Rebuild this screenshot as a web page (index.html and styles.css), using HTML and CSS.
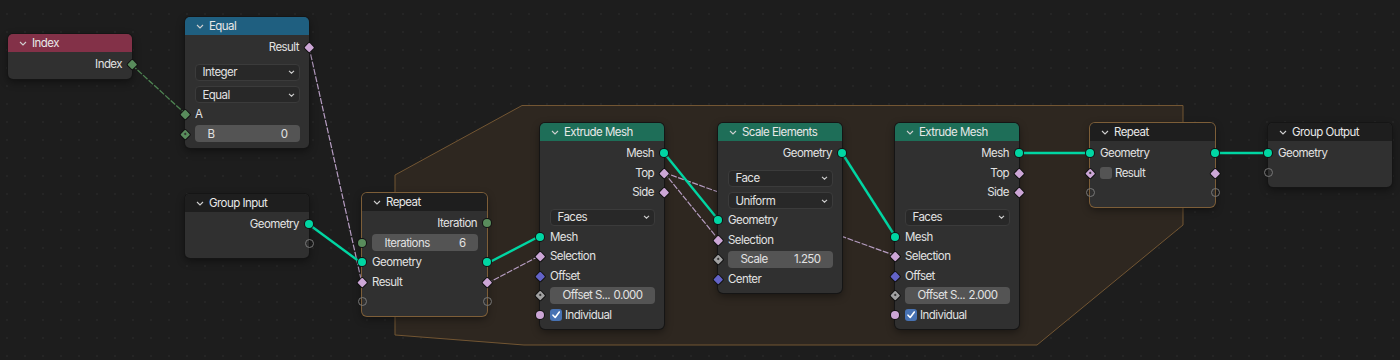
FILE: index.html
```html
<!DOCTYPE html>
<html>
<head>
<meta charset="utf-8">
<link rel="stylesheet" href="styles.css">
<title>Geometry Nodes</title>
</head>
<body>
<div class="editor">
  <svg class="wires" width="1400" height="360" viewBox="0 0 1400 360">
    <polygon class="zone" points="522,105.5 1183,105.5 1183,225 1037,345 524,345 395,335 395,175"/>
    <!-- field links -->
    <line class="w-int" x1="132" y1="65" x2="185" y2="113.5"/>
    <line class="w-bool" x1="309" y1="47" x2="362" y2="283.5"/>
    <line class="w-bool" x1="487" y1="283.5" x2="540" y2="255.5"/>
    <line class="w-bool" x1="664" y1="172.5" x2="718" y2="239"/>
    <line class="w-bool" x1="664" y1="172.5" x2="895" y2="255.5"/>
    <!-- geometry links -->
    <line class="w-geo" x1="309" y1="224.5" x2="362" y2="263.5"/>
    <line class="w-geo" x1="487" y1="263.5" x2="540" y2="236"/>
    <line class="w-geo" x1="664" y1="153" x2="718" y2="219.5"/>
    <line class="w-geo" x1="842" y1="153" x2="895" y2="236"/>
    <line class="w-geo" x1="1019" y1="153" x2="1090" y2="153"/>
    <line class="w-geo" x1="1215" y1="153" x2="1268" y2="153"/>
  </svg>

  <div class="node n-index">
    <div class="head attr"><svg class="chev" width="8" height="5"><path d="M1 1l3 3 3-3"/></svg><span>Index</span></div>
    <div class="body">
      <div class="row out"><span>Index</span><i class="sock dia int"></i></div>
    </div>
  </div>

  <div class="node n-equal">
    <div class="head func"><svg class="chev" width="8" height="5"><path d="M1 1l3 3 3-3"/></svg><span>Equal</span></div>
    <div class="body">
      <div class="row out"><span>Result</span><i class="sock dia bool"></i></div>
      <div class="props">
        <div class="select"><span>Integer</span><svg class="chev" width="7" height="4"><path d="M1 .8l2.5 2.4L6 .8"/></svg></div>
        <div class="select"><span>Equal</span><svg class="chev" width="7" height="4"><path d="M1 .8l2.5 2.4L6 .8"/></svg></div>
      </div>
      <div class="row in"><i class="sock dia int"></i><span>A</span></div>
      <div class="row in fld"><i class="sock dia dot int"></i><div class="field"><span>B</span><span>0</span></div></div>
    </div>
  </div>

  <div class="node n-gin">
    <div class="head"><svg class="chev" width="8" height="5"><path d="M1 1l3 3 3-3"/></svg><span>Group Input</span></div>
    <div class="body">
      <div class="row out"><span>Geometry</span><i class="sock geo"></i></div>
      <div class="row out"><i class="sock empty"></i></div>
    </div>
  </div>

  <div class="node zone-node n-rep1">
    <div class="head"><svg class="chev" width="8" height="5"><path d="M1 1l3 3 3-3"/></svg><span>Repeat</span></div>
    <div class="body">
      <div class="row out"><span>Iteration</span><i class="sock int"></i></div>
      <div class="row in fld"><i class="sock int"></i><div class="field"><span>Iterations</span><span>6</span></div></div>
      <div class="row in"><i class="sock geo"></i><span>Geometry</span><i class="sock geo right"></i></div>
      <div class="row in"><i class="sock dia bool"></i><span>Result</span><i class="sock dia bool right"></i></div>
      <div class="row in"><i class="sock empty"></i><i class="sock empty right"></i></div>
    </div>
  </div>

  <div class="node n-ext1">
    <div class="head geom"><svg class="chev" width="8" height="5"><path d="M1 1l3 3 3-3"/></svg><span>Extrude Mesh</span></div>
    <div class="body">
      <div class="row out"><span>Mesh</span><i class="sock geo"></i></div>
      <div class="row out"><span>Top</span><i class="sock dia bool"></i></div>
      <div class="row out"><span>Side</span><i class="sock dia bool"></i></div>
      <div class="props">
        <div class="select"><span>Faces</span><svg class="chev" width="7" height="4"><path d="M1 .8l2.5 2.4L6 .8"/></svg></div>
      </div>
      <div class="row in"><i class="sock geo"></i><span>Mesh</span></div>
      <div class="row in"><i class="sock dia bool"></i><span>Selection</span></div>
      <div class="row in"><i class="sock dia vec"></i><span>Offset</span></div>
      <div class="row in fld"><i class="sock dia dot flt"></i><div class="field"><span>Offset S...</span><span>0.000</span></div></div>
      <div class="row in"><i class="sock bool"></i><b class="check on"><svg width="10" height="10"><path d="M2 5.2l2.2 2.3L8.3 2"/></svg></b><span>Individual</span></div>
    </div>
  </div>

  <div class="node n-scale">
    <div class="head geom"><svg class="chev" width="8" height="5"><path d="M1 1l3 3 3-3"/></svg><span>Scale Elements</span></div>
    <div class="body">
      <div class="row out"><span>Geometry</span><i class="sock geo"></i></div>
      <div class="props">
        <div class="select"><span>Face</span><svg class="chev" width="7" height="4"><path d="M1 .8l2.5 2.4L6 .8"/></svg></div>
        <div class="select"><span>Uniform</span><svg class="chev" width="7" height="4"><path d="M1 .8l2.5 2.4L6 .8"/></svg></div>
      </div>
      <div class="row in"><i class="sock geo"></i><span>Geometry</span></div>
      <div class="row in"><i class="sock dia bool"></i><span>Selection</span></div>
      <div class="row in fld"><i class="sock dia dot flt"></i><div class="field"><span>Scale</span><span>1.250</span></div></div>
      <div class="row in"><i class="sock dia vec"></i><span>Center</span></div>
    </div>
  </div>

  <div class="node n-ext2">
    <div class="head geom"><svg class="chev" width="8" height="5"><path d="M1 1l3 3 3-3"/></svg><span>Extrude Mesh</span></div>
    <div class="body">
      <div class="row out"><span>Mesh</span><i class="sock geo"></i></div>
      <div class="row out"><span>Top</span><i class="sock dia bool"></i></div>
      <div class="row out"><span>Side</span><i class="sock dia bool"></i></div>
      <div class="props">
        <div class="select"><span>Faces</span><svg class="chev" width="7" height="4"><path d="M1 .8l2.5 2.4L6 .8"/></svg></div>
      </div>
      <div class="row in"><i class="sock geo"></i><span>Mesh</span></div>
      <div class="row in"><i class="sock dia bool"></i><span>Selection</span></div>
      <div class="row in"><i class="sock dia vec"></i><span>Offset</span></div>
      <div class="row in fld"><i class="sock dia dot flt"></i><div class="field"><span>Offset S...</span><span>2.000</span></div></div>
      <div class="row in"><i class="sock bool"></i><b class="check on"><svg width="10" height="10"><path d="M2 5.2l2.2 2.3L8.3 2"/></svg></b><span>Individual</span></div>
    </div>
  </div>

  <div class="node zone-node n-rep2">
    <div class="head"><svg class="chev" width="8" height="5"><path d="M1 1l3 3 3-3"/></svg><span>Repeat</span></div>
    <div class="body">
      <div class="row in"><i class="sock geo"></i><span>Geometry</span><i class="sock geo right"></i></div>
      <div class="row in"><i class="sock dia dot bool"></i><b class="check"></b><span>Result</span><i class="sock dia bool right"></i></div>
      <div class="row in"><i class="sock empty"></i><i class="sock empty right"></i></div>
    </div>
  </div>

  <div class="node n-gout">
    <div class="head"><svg class="chev" width="8" height="5"><path d="M1 1l3 3 3-3"/></svg><span>Group Output</span></div>
    <div class="body">
      <div class="row in"><i class="sock geo"></i><span>Geometry</span></div>
      <div class="row in"><i class="sock empty"></i></div>
    </div>
  </div>
</div>
</body>
</html>
```

FILE: styles.css
```css
html, body { margin: 0; background: #1d1d1d; }

.editor {
  position: relative;
  width: 1400px;
  height: 360px;
  overflow: hidden;
  background-color: #1d1d1d;
  background-image: radial-gradient(circle, #252525 0.8px, transparent 1.3px);
  background-size: 18px 18px;
  background-position: -2px 5px;
  font-family: Inter, "Noto Sans", sans-serif;
  font-size: 11.5px;
  letter-spacing: -0.55px;
  color: #e2e2e2;
}

/* wires and the repeat zone */
.wires { position: absolute; left: 0; top: 0; }
.zone { fill: #2e2720; stroke: #735633; stroke-width: 1; stroke-linejoin: round; }
.w-geo { stroke: #00d6a3; stroke-width: 2.4; }
.w-bool { stroke: #b79ec3; stroke-width: 1.2; stroke-dasharray: 6 1.5; }
.w-int { stroke: #4f8553; stroke-width: 1.3; stroke-dasharray: 6 1.5; }

/* nodes */
.node {
  position: absolute;
  width: 124px;
  background: #303030;
  border-radius: 5px;
  box-shadow: 0 0 0 1px #151515, 0 3px 8px rgba(0, 0, 0, 0.45);
}
.zone-node { width: 125px; box-shadow: 0 0 0 1px #7d5e38, 0 3px 8px rgba(0, 0, 0, 0.45); }

.n-index { left: 8px; top: 34px; }
.n-equal { left: 185px; top: 17px; }
.n-gin { left: 185px; top: 194px; }
.n-rep1 { left: 362px; top: 193px; }
.n-ext1 { left: 540px; top: 123px; }
.n-scale { left: 718px; top: 123px; }
.n-ext2 { left: 895px; top: 123px; }
.n-rep2 { left: 1090px; top: 123px; }
.n-gout { left: 1268px; top: 123px; }

.head {
  height: 18px;
  display: flex;
  align-items: center;
  gap: 5px;
  padding-left: 11px;
  background: #1e1e1e;
  border-radius: 5px 5px 0 0;
  color: #e8e8e8;
}
.head.attr { background: #833148; }
.head.func { background: #1f5f80; }
.head.geom { background: #1e6e58; }

.chev path { fill: none; stroke: #d0d0d0; stroke-width: 1.1; }

.body { padding: 2.5px 0 4.5px; }

.row {
  position: relative;
  height: 19.5px;
  display: flex;
  align-items: center;
  padding: 0 10px;
  white-space: nowrap;
}
.row.out { justify-content: flex-end; }
.row.fld { padding: 0 9.5px; }

/* sockets */
.sock {
  position: absolute;
  top: 50%;
  width: 8px;
  height: 8px;
  margin-top: -4px;
  border-radius: 50%;
  box-shadow: 0 0 0 1px #121212;
}
.in .sock { left: -4px; }
.out .sock, .in .sock.right { left: auto; right: -4px; }
.sock.dia { width: 6.5px; height: 6.5px; margin-top: -3.25px; border-radius: 1px; transform: rotate(45deg); }
.in .sock.dia { left: -3.25px; }
.out .sock.dia, .in .sock.dia.right { left: auto; right: -3.25px; }
.sock.dot::after {
  content: '';
  position: absolute;
  left: 2.25px;
  top: 2.25px;
  width: 2px;
  height: 2px;
  background: #303030;
}
.sock.empty { width: 9px; height: 9px; margin-top: -4.5px; box-sizing: border-box; border: 1.5px solid #777; box-shadow: none; }
.in .sock.empty { left: -4.5px; }
.in .sock.empty.right, .out .sock.empty { left: auto; right: -4.5px; }

.geo { background: #00d6a3; }
.bool { background: #cca6d6; }
.int { background: #598c5c; }
.vec { background: #6363c7; }
.flt { background: #a1a1a1; }

/* buttons */
.props { display: flex; flex-direction: column; gap: 5.5px; padding: 6.5px 9.5px 1.5px; }
.select {
  height: 17px;
  box-sizing: border-box;
  display: flex;
  align-items: center;
  justify-content: space-between;
  padding: 0 4px 0 7px;
  background: #282828;
  border: 1px solid #3b3b3b;
  border-radius: 4px;
}

.field {
  flex: 1;
  height: 17px;
  display: flex;
  align-items: center;
  justify-content: space-between;
  padding: 0 12px 0 13px;
  background: #545454;
  border-radius: 4px;
}

.check {
  width: 12px;
  height: 12px;
  margin-right: 3px;
  border-radius: 3px;
  background: #545454;
  display: flex;
  align-items: center;
  justify-content: center;
}
.check.on { background: #4772b3; }
.check path { fill: none; stroke: #fff; stroke-width: 1.6; stroke-linecap: round; stroke-linejoin: round; }
```
